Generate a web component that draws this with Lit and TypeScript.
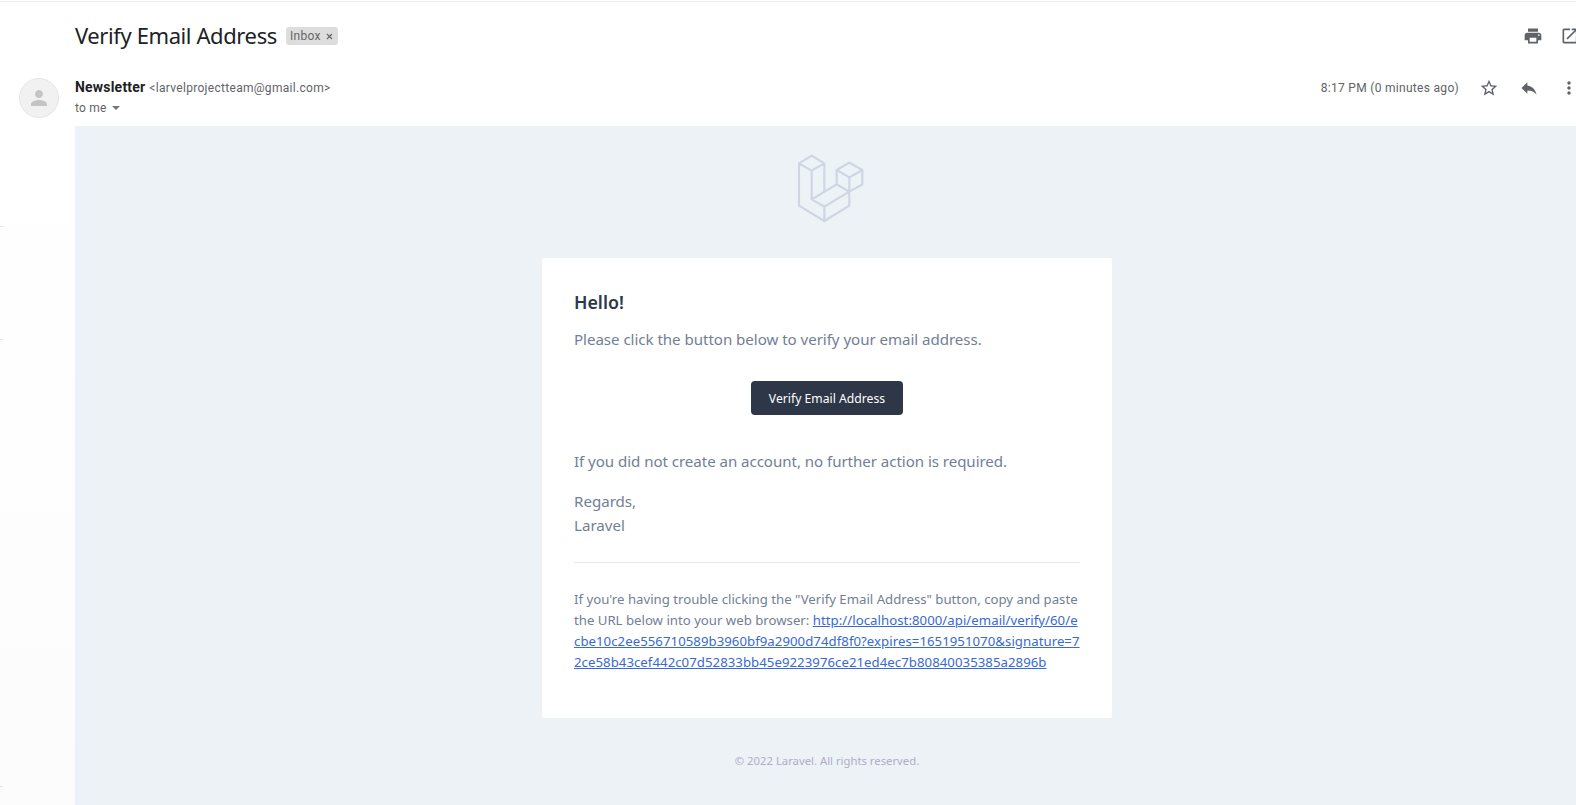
import { LitElement, html, css, svg } from "lit";
import { customElement } from "lit/decorators.js";

@customElement("app-root")
export class AppRoot extends LitElement {
  static styles = css`
    :host { display: block; width: 1576px; height: 805px; overflow: hidden; background: #fff; font-family: Roboto, sans-serif; color: #222; }
    .topline { height: 1px; margin-top: 1px; background: #efefef; }
    .subject { display: flex; align-items: center; height: 66px; padding: 0 0 0 75px; box-sizing: border-box; }
    .title { font-family: "Noto Sans", sans-serif; font-size: 22px; color: #202124; line-height: 28px; letter-spacing: -0.4px; white-space: nowrap; }
    .chip { margin-left: 9px; margin-top: 2px; background: #ddd; color: #666; border-radius: 3px; height: 18px; padding: 0 5px 0 4px; font-size: 12px; letter-spacing: 0.3px; line-height: 18px; display: flex; align-items: center; gap: 5px; }
    .chip .x { width: 7px; height: 7px; display: block; }
    .spacer { flex: 1; }
    .print { width: 20px; height: 20px; display: block; fill: #5f6368; margin: 2px 17px 0 0; }
    .open { width: 20px; height: 20px; display: block; fill: #5f6368; margin: 2px -4px 0 0; }
    .meta { display: flex; height: 58px; box-sizing: border-box; }
    .avatar { margin: 10px 0 0 19px; width: 40px; height: 40px; border-radius: 50%; background: #f1f1f1; box-sizing: border-box; border: 1px solid #e6e6e6; flex: none; display: flex; align-items: center; justify-content: center; }
    .avatar svg { width: 24px; height: 24px; fill: #c4c4c4; display: block; }
    .who { margin-left: 16px; padding-top: 9px; }
    .line1 { font-size: 12px; line-height: 20px; color: #5f6368; white-space: nowrap; letter-spacing: 0.3px; }
    .line1 b { font-size: 14px; font-weight: 700; color: #202124; margin-right: 4px; letter-spacing: 0.2px; }
    .line2 { font-size: 12px; line-height: 20px; color: #5f6368; display: flex; align-items: center; gap: 5px; letter-spacing: 0.2px; }
    .caret { width: 0; height: 0; border-left: 4px solid transparent; border-right: 4px solid transparent; border-top: 4px solid #777; }
    .right { display: flex; align-items: flex-start; padding-top: 10px; }
    .time { font-size: 12px; line-height: 20px; color: #5f6368; white-space: nowrap; margin-right: 20px; letter-spacing: 0.3px; }
    .ico { width: 20px; height: 20px; display: block; fill: #5f6368; }
    .star { margin-right: 20px; }
    .reply { margin-right: 20px; }
    .more { margin-right: -3px; }
    .body { display: flex; }
    .rail { width: 75px; flex: none; background: linear-gradient(#fff, #fcfcfc); }
    .tick { width: 3px; height: 1px; background: #e4e4e4; }
    .tick.a { margin-top: 100px; }
    .tick.b { margin-top: 112px; }
    .tick.c { margin-top: 446px; }
    .mail { width: 1504px; flex: none; height: 679px; background: #edf2f7; font-family: "Noto Sans", sans-serif; display: flex; flex-direction: column; align-items: center; }
    .logo { display: block; width: 110px; height: 90px; margin: 14px 4px 0 0; }
    .card { margin-top: 28px; width: 570px; height: 460px; box-sizing: border-box; background: #fff; padding: 32px; color: #718096; font-size: 15.1px; border-radius: 2px; }
    h1 { margin: 0; font-size: 17.8px; font-weight: 600; line-height: 24px; color: #2d3748; }
    p { margin: 0; white-space: nowrap; }
    .please { margin-top: 13px; line-height: 24px; letter-spacing: -0.04px; }
    .btnrow { display: flex; justify-content: center; margin-top: 30px; }
    .btn { background: #2d3748; color: #fff; font-size: 12.2px; height: 34px; width: 152px; border-radius: 4px; display: flex; align-items: center; justify-content: center; }
    .noact { margin-top: 34px; line-height: 24px; letter-spacing: -0.05px; }
    .reg { margin-top: 16px; line-height: 24px; }
    hr { border: 0; border-top: 1px solid #e8e5ef; margin: 25px 0 0; }
    .sub { margin-top: 26px; font-size: 13.2px; line-height: 21px; }
    a { color: #3869d4; text-decoration: underline; letter-spacing: 0.05px; }
    .foot { margin-top: 34px; font-size: 11.3px; line-height: 18px; color: #b0adc5; }
  `;

  render() {
    return html`
      <div class="topline"></div>
      <div class="subject">
        <div class="title">Verify Email Address</div>
        <div class="chip">Inbox
          <svg class="x" viewBox="0 0 7 7"><path d="M1 1l5 5M6 1L1 6" stroke="#666" stroke-width="1.2"/></svg>
        </div>
        <div class="spacer"></div>
        <svg class="print" viewBox="0 0 24 24"><path d="M19 8H5c-1.66 0-3 1.34-3 3v6h4v4h12v-4h4v-6c0-1.66-1.34-3-3-3zm-3 11H8v-5h8v5zm3-7c-.55 0-1-.45-1-1s.45-1 1-1 1 .45 1 1-.45 1-1 1zm-1-9H6v4h12V3z"/></svg>
        <svg class="open" viewBox="0 0 24 24"><path d="M19 19H5V5h7V3H5c-1.11 0-2 .9-2 2v14c0 1.1.89 2 2 2h14c1.1 0 2-.9 2-2v-7h-2v7zM14 3v2h3.59l-9.83 9.83 1.41 1.41L19 6.41V10h2V3h-7z"/></svg>
      </div>
      <div class="meta">
        <div class="avatar"><svg viewBox="0 0 24 24"><path d="M12 12c2.21 0 4-1.79 4-4s-1.79-4-4-4-4 1.79-4 4 1.79 4 4 4zm0 2c-2.67 0-8 1.34-8 4v2h16v-2c0-2.66-5.33-4-8-4z"/></svg></div>
        <div class="who">
          <div class="line1"><b>Newsletter</b>&lt;larvelprojectteam@gmail.com&gt;</div>
          <div class="line2">to me <span class="caret"></span></div>
        </div>
        <div class="spacer"></div>
        <div class="right">
          <div class="time">8:17 PM (0 minutes ago)</div>
          <svg class="ico star" viewBox="0 0 24 24"><path d="M22 9.24l-7.19-.62L12 2 9.19 8.63 2 9.24l5.46 4.73L5.82 21 12 17.27 18.18 21l-1.63-7.03L22 9.24zM12 15.4l-3.76 2.27 1-4.28-3.32-2.88 4.38-.38L12 6.1l1.71 4.04 4.38.38-3.32 2.88 1 4.28L12 15.4z"/></svg>
          <svg class="ico reply" viewBox="0 0 24 24"><path d="M10 9V5l-7 7 7 7v-4.1c5 0 8.5 1.6 11 5.1-1-5-4-10-11-11z"/></svg>
          <svg class="ico more" viewBox="0 0 24 24"><path d="M12 8c1.1 0 2-.9 2-2s-.9-2-2-2-2 .9-2 2 .9 2 2 2zm0 2c-1.1 0-2 .9-2 2s.9 2 2 2 2-.9 2-2-.9-2-2-2zm0 6c-1.1 0-2 .9-2 2s.9 2 2 2 2-.9 2-2-.9-2-2-2z"/></svg>
        </div>
      </div>
      <div class="body">
        <div class="rail"><div class="tick a"></div><div class="tick b"></div><div class="tick c"></div></div>
        <div class="mail">
          <svg class="logo" viewBox="0 0 330 270" fill="none" stroke="#cdd6e2" stroke-width="6.5" stroke-linejoin="round">
            ${svg`<path d="M125 47 L87 70 L125 92 L163 70 Z M87 70 V197 L163 243 L238 197 V155 M163 70 V155 M125 92 V178 L163 200 L238 155 M163 200 V243 M125 178 L200 133 L238 155 M238 68 L200 90 L238 112 L277 90 Z M200 90 V133 M277 90 V133 L238 155 M238 112 V155"/>`}
          </svg>
          <div class="card">
            <h1>Hello!</h1>
            <p class="please">Please click the button below to verify your email address.</p>
            <div class="btnrow"><div class="btn">Verify Email Address</div></div>
            <p class="noact">If you did not create an account, no further action is required.</p>
            <p class="reg">Regards,<br />Laravel</p>
            <hr />
            <p class="sub">If you're having trouble clicking the "Verify Email Address" button, copy and paste<br />the URL below into your web browser: <a href="#">http://localhost:8000/api/email/verify/60/e<br />cbe10c2ee556710589b3960bf9a2900d74df8f0?expires=1651951070&amp;signature=7<br />2ce58b43cef442c07d52833bb45e9223976ce21ed4ec7b80840035385a2896b</a></p>
          </div>
          <div class="foot">© 2022 Laravel. All rights reserved.</div>
        </div>
      </div>
    `;
  }
}
